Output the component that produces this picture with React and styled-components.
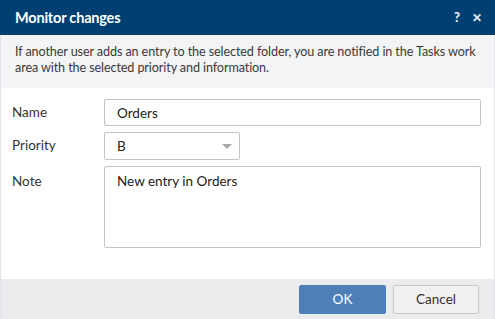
import React from "react";
import styled, { createGlobalStyle } from "styled-components";

const GlobalStyle = createGlobalStyle`
  html, body {
    margin: 0;
    padding: 0;
    background: #ffffff;
  }
  body {
    font-family: Lato, "Liberation Sans", sans-serif;
    color: #333333;
  }
`;

const Dialog = styled.div`
  width: 495px;
  height: 319px;
  display: flex;
  flex-direction: column;
  box-sizing: border-box;
  border-left: 1px solid #e3e5e8;
  border-right: 1px solid #e3e5e8;
`;

const TitleBar = styled.div`
  height: 35px;
  flex: none;
  background: #003f72;
  color: #ffffff;
  display: flex;
  align-items: center;
  padding: 0 13px 0 15px;
  margin: 0 -1px;
`;

const Title = styled.div`
  flex: 1;
  font-size: 14.5px;
  font-weight: 700;
  letter-spacing: -0.2px;
`;

const TitleButton = styled.span`
  font-size: ${(p) => p.$size || 13}px;
  font-weight: 900;
  margin-left: 12px;
  color: #e6edf5;
  line-height: 1;
`;

const Info = styled.div`
  height: 53px;
  flex: none;
  box-sizing: border-box;
  background: #f3f4f6;
  padding: 9px 4px 0 14px;
  font-size: 12.6px;
  line-height: 16px;
  letter-spacing: -0.1px;
  white-space: nowrap;
  color: #3a3a3a;
`;

const Form = styled.div`
  flex: 1;
  display: grid;
  grid-template-columns: 92px 377px;
  row-gap: 6px;
  padding: 11px 0 0 11px;
  align-content: start;
`;

const Label = styled.label`
  font-size: 13.5px;
  color: #333;
  padding-top: ${(p) => p.$top || 5}px;
`;

const TextInput = styled.div`
  height: 27px;
  box-sizing: border-box;
  border: 1px solid #c4c4c4;
  border-radius: 2px;
  padding: 0 12px;
  display: flex;
  align-items: center;
  font-size: 13.5px;
  color: #222;
  width: ${(p) => p.$width || 377}px;
`;

const Select = styled(TextInput)`
  height: 28px;
  justify-content: space-between;
  padding-right: 7px;
`;

const Arrow = styled.span`
  width: 0;
  height: 0;
  border-left: 5px solid transparent;
  border-right: 5px solid transparent;
  border-top: 5px solid #a9a9a9;
`;

const TextArea = styled(TextInput)`
  height: 82px;
  align-items: flex-start;
  padding-top: 6px;
`;

const Footer = styled.div`
  height: 40px;
  flex: none;
  background: #ebecee;
  display: flex;
  justify-content: flex-end;
  align-items: center;
  gap: 7px;
  padding: 0 15px 0 0;
`;

const Button = styled.div`
  width: ${(p) => (p.$primary ? 87 : 86)}px;
  height: 29px;
  box-sizing: border-box;
  border-radius: 2px;
  display: flex;
  align-items: center;
  justify-content: center;
  font-size: 13.5px;
  background: ${(p) => (p.$primary ? "#4f7fb8" : "#f1f1f2")};
  color: ${(p) => (p.$primary ? "#ffffff" : "#333333")};
  border: 1px solid ${(p) => (p.$primary ? "#4f7fb8" : "#c8c8c8")};
`;

export default function App() {
  return (
    <>
      <GlobalStyle />
      <Dialog>
        <TitleBar>
          <Title>Monitor changes</Title>
          <TitleButton $size={13}>?</TitleButton>
          <TitleButton $size={12}>✕</TitleButton>
        </TitleBar>
        <Info>
          If another user adds an entry to the selected folder, you are notified in the Tasks work
          <br />
          area with the selected priority and information.
        </Info>
        <Form>
          <Label>Name</Label>
          <TextInput>Orders</TextInput>
          <Label>Priority</Label>
          <Select $width={136}>
            B
            <Arrow />
          </Select>
          <Label $top={7}>Note</Label>
          <TextArea>New entry in Orders</TextArea>
        </Form>
        <Footer>
          <Button $primary>OK</Button>
          <Button>Cancel</Button>
        </Footer>
      </Dialog>
    </>
  );
}
